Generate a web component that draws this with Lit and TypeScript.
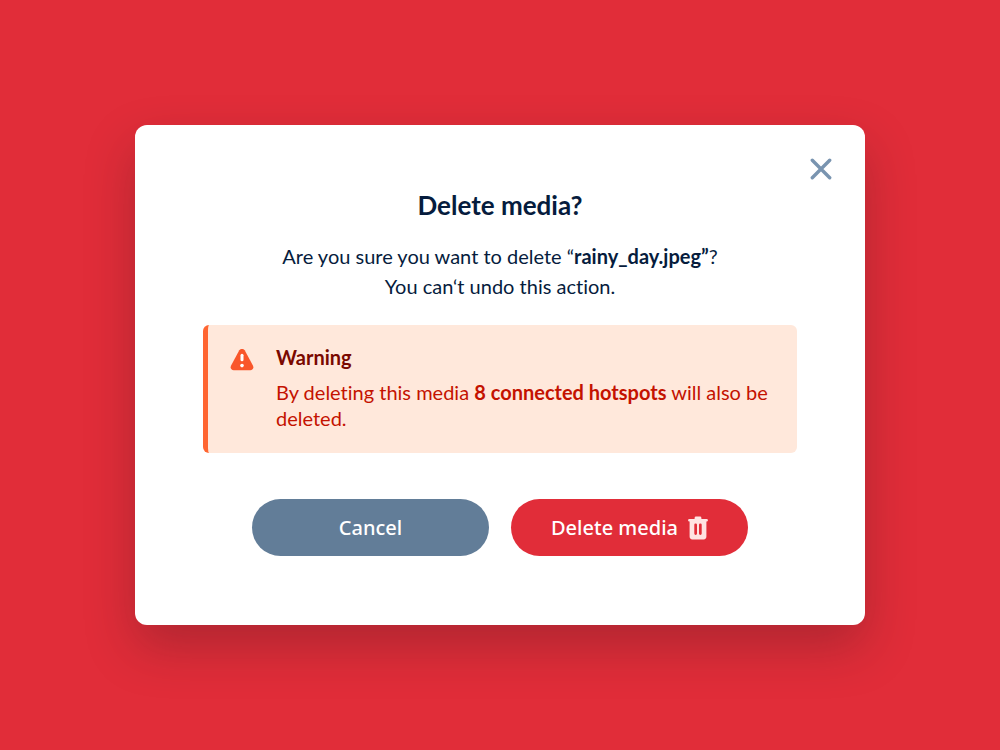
import { LitElement, html, css } from "lit";
import { customElement, property } from "lit/decorators.js";

@customElement("app-root")
export class AppRoot extends LitElement {
  @property() fileName = "rainy_day.jpeg";
  @property({ type: Number }) hotspots = 8;

  static styles = css`
    :host {
      display: flex;
      align-items: center;
      justify-content: center;
      min-height: 100vh;
      box-sizing: border-box;
      padding: 24px;
      background: #e12d39;
      font-family: Lato, "Open Sans", sans-serif;
      font-size: 20px;
      font-variant-ligatures: none;
      color: #061c3d;
    }
    * {
      box-sizing: border-box;
    }
    .dialog {
      display: flex;
      flex-direction: column;
      width: 100%;
      max-width: 730px;
      padding: 28px 28px 69px;
      border-radius: 12px;
      background: #fff;
      box-shadow: 0 22px 50px rgba(50, 20, 30, 0.28);
    }
    button {
      border: 0;
      cursor: pointer;
    }
    .close {
      display: flex;
      align-items: center;
      justify-content: center;
      align-self: flex-end;
      width: 32px;
      height: 32px;
      padding: 0;
      background: none;
      color: #7994b0;
    }
    .content {
      display: flex;
      flex-direction: column;
      padding: 4px 40px 0;
    }
    .title {
      margin: 0;
      font-size: 26px;
      line-height: 32px;
      font-weight: 700;
      text-align: center;
    }
    .question {
      margin: 20px 0 0;
      line-height: 30px;
      text-align: center;
    }
    strong {
      font-weight: 700;
    }
    .alert {
      display: flex;
      gap: 22px;
      margin-top: 24px;
      padding: 19px 20px 22px 22px;
      border-left: 5px solid #ff6531;
      border-radius: 6px;
      background: #ffe8db;
      color: #c41200;
    }
    .alert-icon {
      flex: none;
      margin-top: 4px;
    }
    .alert-title {
      margin: 0 0 9px;
      font-size: 20px;
      line-height: 26px;
      font-weight: 700;
      color: #7a0800;
    }
    .alert-text {
      margin: 0;
      line-height: 26px;
    }
    .actions {
      display: grid;
      grid-template-columns: 1fr 1fr;
      gap: 22px;
      margin: 46px 49px 0;
    }
    .action {
      display: flex;
      align-items: center;
      justify-content: center;
      gap: 10px;
      height: 57px;
      border-radius: 29px;
      color: #fff;
      font-family: "Noto Sans", "Open Sans", sans-serif;
      font-size: 20px;
      font-weight: 500;
      line-height: 28px;
    }
    .cancel {
      background: #627d98;
    }
    .delete {
      background: #e12d39;
    }
  `;

  render() {
    return html`
      <section class="dialog" role="alertdialog" aria-labelledby="title" aria-describedby="question">
        <button class="close" aria-label="Close">
          <svg width="22" height="22" viewBox="0 0 22 22" fill="none" stroke="currentColor" stroke-width="3.4" stroke-linecap="round" aria-hidden="true">
            <path d="M2.3 2.3 19.7 19.7M19.7 2.3 2.3 19.7" />
          </svg>
        </button>
        <div class="content">
          <h1 class="title" id="title">Delete media?</h1>
          <p class="question" id="question">
            Are you sure you want to delete “<strong>${this.fileName}”</strong>?<br />You can‘t undo this action.
          </p>
          <div class="alert">
            <svg class="alert-icon" width="24" height="24" viewBox="0 0 24 24" aria-hidden="true">
              <path fill="#f9562a" d="M9.3 2.3C10.5.4 13.5.4 14.7 2.3L22.9 17.6C24.1 20 22.7 22.3 20.3 22.3H3.7C1.3 22.3-.1 20 1.1 17.6Z" />
              <path stroke="#fff" stroke-width="3" stroke-linecap="round" d="M12 7.2V11.7" />
              <circle cx="12" cy="17.6" r="1.8" fill="#fff" />
            </svg>
            <div>
              <h2 class="alert-title">Warning</h2>
              <p class="alert-text">
                By deleting this media <strong>${this.hotspots} connected hotspots</strong> will also be deleted.
              </p>
            </div>
          </div>
          <div class="actions">
            <button class="action cancel">Cancel</button>
            <button class="action delete">
              Delete media
              <svg width="20" height="24" viewBox="0 0 20 24" fill="#ffe3e3" aria-hidden="true">
                <path fill-rule="evenodd" d="M8 .5H12A1.4 1.4 0 0 1 13.4 1.9V2.9H18.6A1.3 1.3 0 0 1 18.6 5.6H18.4V20.6A2.8 2.8 0 0 1 15.6 23.4H4.4A2.8 2.8 0 0 1 1.6 20.6V5.6H1.4A1.3 1.3 0 0 1 1.4 2.9H6.6V1.9A1.4 1.4 0 0 1 8 .5ZM7.7 7.4A1.3 1.3 0 0 0 6.3 8.7V17.6A1.3 1.3 0 0 0 9 17.6V8.7A1.3 1.3 0 0 0 7.7 7.4ZM12.3 7.4A1.3 1.3 0 0 0 11 8.7V17.6A1.3 1.3 0 0 0 13.7 17.6V8.7A1.3 1.3 0 0 0 12.3 7.4Z" />
              </svg>
            </button>
          </div>
        </div>
      </section>
    `;
  }
}
